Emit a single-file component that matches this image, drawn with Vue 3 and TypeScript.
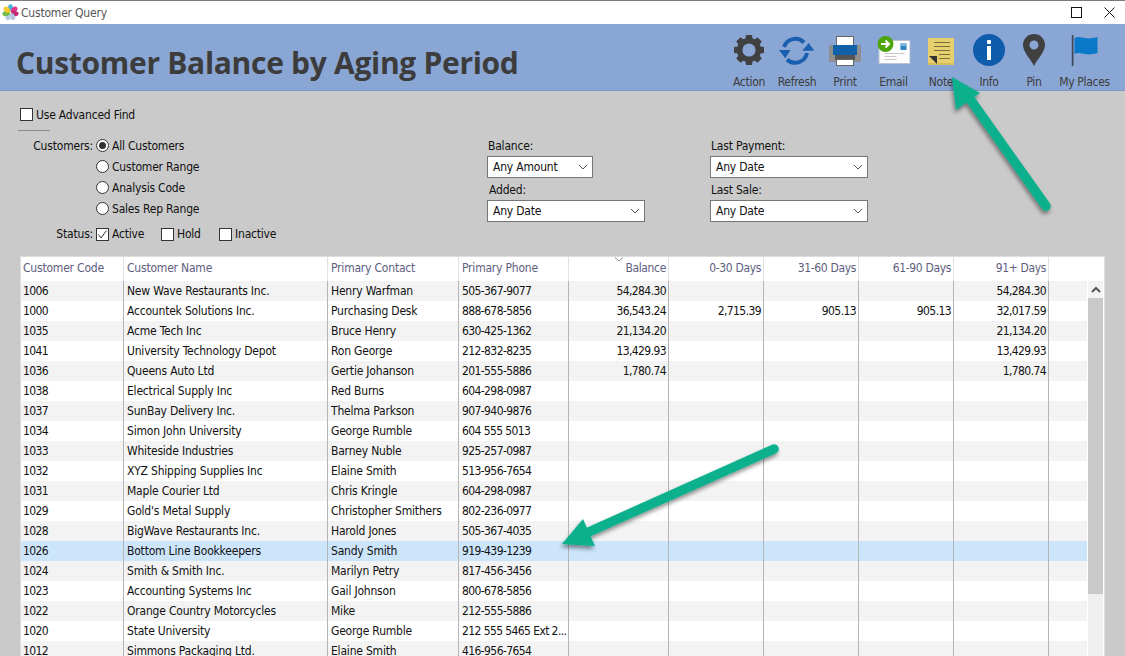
<script setup lang="ts">
interface Row { code: string; name: string; contact: string; phone: string; balance?: string; d30?: string; d60?: string; d90?: string; d91?: string; selected?: boolean }
const rows: Row[] = [
  { code: '1006', name: 'New Wave Restaurants Inc.', contact: 'Henry Warfman', phone: '505-367-9077', balance: '54,284.30', d91: '54,284.30' },
  { code: '1000', name: 'Accountek Solutions Inc.', contact: 'Purchasing Desk', phone: '888-678-5856', balance: '36,543.24', d30: '2,715.39', d60: '905.13', d90: '905.13', d91: '32,017.59' },
  { code: '1035', name: 'Acme Tech Inc', contact: 'Bruce Henry', phone: '630-425-1362', balance: '21,134.20', d91: '21,134.20' },
  { code: '1041', name: 'University Technology Depot', contact: 'Ron George', phone: '212-832-8235', balance: '13,429.93', d91: '13,429.93' },
  { code: '1036', name: 'Queens Auto Ltd', contact: 'Gertie Johanson', phone: '201-555-5886', balance: '1,780.74', d91: '1,780.74' },
  { code: '1038', name: 'Electrical Supply Inc', contact: 'Red Burns', phone: '604-298-0987' },
  { code: '1037', name: 'SunBay Delivery Inc.', contact: 'Thelma Parkson', phone: '907-940-9876' },
  { code: '1034', name: 'Simon John University', contact: 'George Rumble', phone: '604 555 5013' },
  { code: '1033', name: 'Whiteside Industries', contact: 'Barney Nuble', phone: '925-257-0987' },
  { code: '1032', name: 'XYZ Shipping Supplies Inc', contact: 'Elaine Smith', phone: '513-956-7654' },
  { code: '1031', name: 'Maple Courier Ltd', contact: 'Chris Kringle', phone: '604-298-0987' },
  { code: '1029', name: "Gold's Metal Supply", contact: 'Christopher Smithers', phone: '802-236-0977' },
  { code: '1028', name: 'BigWave Restaurants Inc.', contact: 'Harold Jones', phone: '505-367-4035' },
  { code: '1026', name: 'Bottom Line Bookkeepers', contact: 'Sandy Smith', phone: '919-439-1239', selected: true },
  { code: '1024', name: 'Smith & Smith Inc.', contact: 'Marilyn Petry', phone: '817-456-3456' },
  { code: '1023', name: 'Accounting Systems Inc', contact: 'Gail Johnson', phone: '800-678-5856' },
  { code: '1022', name: 'Orange Country Motorcycles', contact: 'Mike', phone: '212-555-5886' },
  { code: '1020', name: 'State University', contact: 'George Rumble', phone: '212 555 5465 Ext 2...' },
  { code: '1012', name: 'Simmons Packaging Ltd.', contact: 'Elaine Smith', phone: '416-956-7654' },
]
const tools = ['Action', 'Refresh', 'Print', 'Email', 'Note', 'Info', 'Pin', 'My Places']
const petals = [
  { a: 0, c: '#45b4dc' },
  { a: 52, c: '#e0358a' },
  { a: 103, c: '#c42b75' },
  { a: 155, c: '#b5c5e0' },
  { a: 206, c: '#b9cbe0' },
  { a: 257, c: '#73b848' },
  { a: 308, c: '#f8c92c' },
]
</script>

<template>
  <div class="win">
    <div class="titlebar">
      <svg class="logo" width="17" height="17" viewBox="0 0 17 17">
        <ellipse v-for="p in petals" :key="p.a" cx="8.500" cy="4" rx="2.500" ry="3.800" :fill="p.c" :transform="`rotate(${p.a} 8.500 8.500)`"/>
      </svg>
      <span class="wintitle">Customer Query</span>
      <span class="spacer"></span>
      <svg class="winbtn" width="11" height="11" viewBox="0 0 11 11"><rect x="0.500" y="0.500" width="10" height="10" fill="none" stroke="#111" stroke-width="1"/></svg>
      <svg class="winbtn close" width="11" height="11" viewBox="0 0 11 11"><path d="M0.500 0.500 L10.500 10.500 M10.500 0.500 L0.500 10.500" stroke="#111" stroke-width="1" fill="none"/></svg>
    </div>

    <header class="banner">
      <h1>Customer Balance by Aging Period</h1>
      <div class="tools">
        <div v-for="t in tools" :key="t" class="tool" :class="'t-' + t.replace(' ', '')">
          <svg v-if="t === 'Action'" width="30" height="30" viewBox="0 0 32 32">
            <g fill="#404040">
              <rect x="12.500" y="0" width="7" height="32" rx="1"/>
              <rect x="12.500" y="0" width="7" height="32" rx="1" transform="rotate(45 16 16)"/>
              <rect x="12.500" y="0" width="7" height="32" rx="1" transform="rotate(90 16 16)"/>
              <rect x="12.500" y="0" width="7" height="32" rx="1" transform="rotate(135 16 16)"/>
            </g>
            <circle cx="16" cy="16" r="10" fill="none" stroke="#404040" stroke-width="6"/>
            <circle cx="16" cy="16" r="7" fill="#8aa6d4"/>
          </svg>
          <svg v-else-if="t === 'Refresh'" width="36" height="30" viewBox="0 0 36 30">
            <path d="M25 7.500 A12 12 0 0 0 5 12" fill="none" stroke="#1a5eb0" stroke-width="4"/>
            <path d="M0 15 L11.500 15 L6.300 23.300z" fill="#1a5eb0"/>
            <path d="M28 18 A12 12 0 0 1 8 24.500" fill="none" stroke="#1a5eb0" stroke-width="4"/>
            <path d="M35.300 15.700 L23.300 15.700 L29.700 8z" fill="#1a5eb0"/>
          </svg>
          <svg v-else-if="t === 'Print'" width="32" height="30" viewBox="0 0 32 30">
            <rect x="0" y="9" width="32" height="17" fill="#8f8f8f"/>
            <rect x="7.500" y="0.500" width="17" height="12" fill="#fff" stroke="#666" stroke-width="1"/>
            <rect x="4" y="9" width="24" height="10" fill="#1060aa"/>
            <rect x="6" y="19" width="20" height="5" fill="#555"/>
            <rect x="7.500" y="23.500" width="17" height="6" fill="#fff" stroke="#666" stroke-width="1"/>
          </svg>
          <svg v-else-if="t === 'Email'" width="33" height="28" viewBox="0 0 33 28">
            <rect x="1.500" y="4.500" width="31" height="23" fill="#fdfdfd" stroke="#b9c3d6" stroke-width="1"/>
            <rect x="23" y="7.500" width="6" height="6.500" fill="#2f86c4"/>
            <rect x="23" y="7.500" width="6" height="2.500" fill="#7fb5dc"/>
            <path d="M7 17.500h20M7 20.500h12M7 23.500h12" stroke="#c8c8c8" stroke-width="1"/>
            <circle cx="8" cy="8" r="8" fill="#4ea50a"/>
            <path d="M3.500 8h8M8 4.500 L11.500 8 L8 11.500" stroke="#fff" stroke-width="2" fill="none"/>
          </svg>
          <svg v-else-if="t === 'Note'" width="26" height="27" viewBox="0 0 26 27">
            <rect width="26" height="27" fill="#e7cf6e"/>
            <rect y="25" width="26" height="2" fill="#d8be5a"/>
            <path d="M6 4.500h16M6 8.500h16M6 12.500h16M11 16.500h11M11 20.500h11" stroke="#77703f" stroke-width="1"/>
            <path d="M1 18 L9 18 L9 26z" fill="#333"/>
          </svg>
          <svg v-else-if="t === 'Info'" width="32" height="32" viewBox="0 0 32 32">
            <circle cx="16" cy="16" r="16" fill="#0f5cad"/>
            <rect x="14" y="6" width="4" height="4" rx="1" fill="#fff"/>
            <rect x="14" y="12" width="4" height="14" fill="#fff"/>
          </svg>
          <svg v-else-if="t === 'Pin'" width="22" height="32" viewBox="0 0 22 32">
            <path fill-rule="evenodd" d="M11 0 C4.900 0 0 4.900 0 11 C0 18 7 24 11 32 C15 24 22 18 22 11 C22 4.900 17.100 0 11 0z M11 6.500 A4.500 4.500 0 1 1 11 15.500 A4.500 4.500 0 1 1 11 6.500z" fill="#404040"/>
          </svg>
          <svg v-else width="27" height="31" viewBox="0 0 27 31">
            <rect x="0" y="0" width="2" height="31" fill="#404a5c"/>
            <path d="M3 3 C9 0 13 6 26 2 L26 18 C13 22 9 16 3 19z" fill="#0b79c9"/>
          </svg>
          <span class="tlabel">{{ t }}</span>
        </div>
      </div>
    </header>

    <main class="body">
      <label class="check advanced"><i class="box"></i>Use Advanced Find</label>
      <div class="rule"></div>

      <section class="filters">
        <div class="radios">
          <div class="fline"><span class="flabel">Customers:</span><label class="check"><i class="radio on"></i>All Customers</label></div>
          <div class="fline"><span class="flabel"></span><label class="check"><i class="radio"></i>Customer Range</label></div>
          <div class="fline"><span class="flabel"></span><label class="check"><i class="radio"></i>Analysis Code</label></div>
          <div class="fline"><span class="flabel"></span><label class="check"><i class="radio"></i>Sales Rep Range</label></div>
          <div class="fline status">
            <span class="flabel">Status:</span>
            <label class="check s1"><i class="box">
              <svg width="13" height="13" viewBox="0 0 13 13"><path d="M2.500 6.500 L5 10 L10.500 2.500" stroke="#333" stroke-width="1" fill="none"/></svg>
            </i>Active</label>
            <label class="check s2"><i class="box"></i>Hold</label>
            <label class="check"><i class="box"></i>Inactive</label>
          </div>
        </div>
        <div class="selects one">
          <div class="sel-label">Balance:</div>
          <div class="select w106"><span>Any Amount</span><svg width="10" height="6" viewBox="0 0 10 6"><path d="M1 1 L5 5 L9 1" fill="none" stroke="#555"/></svg></div>
          <div class="sel-label added">Added:</div>
          <div class="select w158"><span>Any Date</span><svg width="10" height="6" viewBox="0 0 10 6"><path d="M1 1 L5 5 L9 1" fill="none" stroke="#555"/></svg></div>
        </div>
        <div class="selects two">
          <div class="sel-label">Last Payment:</div>
          <div class="select w158"><span>Any Date</span><svg width="10" height="6" viewBox="0 0 10 6"><path d="M1 1 L5 5 L9 1" fill="none" stroke="#555"/></svg></div>
          <div class="sel-label">Last Sale:</div>
          <div class="select w158"><span>Any Date</span><svg width="10" height="6" viewBox="0 0 10 6"><path d="M1 1 L5 5 L9 1" fill="none" stroke="#555"/></svg></div>
        </div>
      </section>

      <section class="grid">
        <div class="thead">
          <div class="th c1">Customer Code</div>
          <div class="th c2 pad">Customer Name</div>
          <div class="th c3 pad">Primary Contact</div>
          <div class="th c4 pad">Primary Phone</div>
          <div class="th c5 num">
            <svg class="sort" width="10" height="5" viewBox="0 0 10 5"><path d="M1 0.500 L5 4 L9 0.500" fill="none" stroke="#888"/></svg>
            Balance
          </div>
          <div class="th c6 num">0-30 Days</div>
          <div class="th c7 num">31-60 Days</div>
          <div class="th c8 num">61-90 Days</div>
          <div class="th c9 num">91+ Days</div>
          <div class="th c10"></div>
        </div>
        <div class="tbody">
          <div class="rows">
            <div v-for="r in rows" :key="r.code" class="tr" :class="{ sel: r.selected }">
              <div class="td c1 digits">{{ r.code }}</div>
              <div class="td c2 pad">{{ r.name }}</div>
              <div class="td c3 pad">{{ r.contact }}</div>
              <div class="td c4 pad digits">{{ r.phone }}</div>
              <div class="td c5 num digits">{{ r.balance }}</div>
              <div class="td c6 num digits">{{ r.d30 }}</div>
              <div class="td c7 num digits">{{ r.d60 }}</div>
              <div class="td c8 num digits">{{ r.d90 }}</div>
              <div class="td c9 num digits">{{ r.d91 }}</div>
              <div class="c10b"></div>
            </div>
          </div>
          <div class="scroll">
            <div class="sbtn"><svg width="10" height="7" viewBox="0 0 10 7"><path d="M1 6 L5 2 L9 6" fill="none" stroke="#555" stroke-width="2"/></svg></div>
            <div class="thumb"></div>
            <div class="track"></div>
          </div>
        </div>
      </section>
    </main>

    <svg class="arrows" width="1125" height="656" viewBox="0 0 1125 656">
      <defs>
        <filter id="sh" x="-20%" y="-20%" width="140%" height="140%"><feDropShadow dx="-1" dy="3" stdDeviation="2" flood-color="#000" flood-opacity="0.45"/></filter>
      </defs>
      <g filter="url(#sh)" fill="#08b08c">
        <path d="M1046 206 L965 92" stroke="#08b08c" stroke-width="9.500" stroke-linecap="round" fill="none"/>
        <path d="M952 77 L980 93 L956 110z"/>
        <path d="M774 449 L582 535" stroke="#08b08c" stroke-width="9.500" stroke-linecap="round" fill="none"/>
        <path d="M562 544 L583 519 L595 546z"/>
      </g>
    </svg>
  </div>
</template>

<style>
html, body { margin: 0; background: #cacaca; }
</style>

<style scoped>
.win {
  position: relative;
  width: 1125px;
  height: 656px;
  overflow: hidden;
  background: #cacaca;
  font-family: "DejaVu Sans", "Noto Sans", sans-serif;
  font-stretch: condensed;
  font-size: 12px;
  letter-spacing: -0.2px;
  color: #111;
}
.titlebar {
  height: 23px;
  border-top: 1px solid #7a7a7a;
  background: #fff;
  display: flex;
  align-items: center;
  padding: 0 10px 0 2px;
}
.logo { margin-right: 2px; }
.wintitle { color: #555; }
.spacer { flex: 1; }
.winbtn { margin-left: 22px; }
.banner {
  height: 66px;
  background: #8aa6d4;
  border-bottom: 1px solid #7f9ac6;
  display: flex;
  align-items: flex-start;
  justify-content: space-between;
}
h1 {
  margin: 19px 0 0 16px;
  font-family: "Open Sans", sans-serif;
  font-stretch: normal;
  font-weight: 700;
  font-size: 30px;
  line-height: 40px;
  color: #3c3c3c;
  letter-spacing: -0.3px;
}
.tools { height: 100%; position: relative; width: 405px; }
.tool {
  position: absolute;
  top: 11px;
  transform: translateX(-50%);
  display: flex;
  flex-direction: column;
  align-items: center;
}
.tool svg { display: block; }
.tlabel {
  position: absolute;
  top: 40px;
  white-space: nowrap;
  color: #3c3c3c;
  letter-spacing: -0.3px;
}
.t-Action { left: 29px; }
.t-Refresh { left: 77px; }
.t-Print { left: 125px; top: 12px; }
.t-Email { left: 173.500px; top: 12px; }
.t-Note { left: 221px; top: 14px; }
.t-Info { left: 269px; top: 10px; }
.t-Pin { left: 314px; top: 10px; }
.t-MyPlaces { left: 364.500px; top: 11px; }
.t-Print .tlabel, .t-Email .tlabel { top: 39px; }
.t-Note .tlabel { top: 37px; }
.t-Info .tlabel, .t-Pin .tlabel { top: 41px; }
.body { padding: 16px 0 0 20px; }
.check { display: flex; align-items: center; white-space: nowrap; }
.box, .radio {
  display: block;
  width: 11px;
  height: 11px;
  margin-right: 3px;
  background: #fff;
  border: 1px solid #333;
  position: relative;
  flex: none;
}
.advanced .box { margin-top: -2px; }
.box svg { position: absolute; left: -1px; top: -1px; }
.radio { border-radius: 50%; }
.radio.on::after {
  content: "";
  position: absolute;
  left: 2px; top: 2px;
  width: 7px; height: 7px;
  border-radius: 50%;
  background: #333;
}
.advanced { height: 16px; }
.rule { width: 32px; height: 1px; background: #8a8a8a; margin: 7px 0 0 -2px; }
.filters { display: flex; height: 125px; }
.radios { width: 467px; padding-top: 4px; }
.fline { display: flex; align-items: center; height: 21px; }
.status { height: 24px; padding-top: 3px; }
.flabel { width: 73px; text-align: right; margin: 0 3px 0 0; }
.s1 { width: 65px; }
.s2 { width: 58px; }
.selects { padding-top: 3px; }
.one { width: 158px; }
.two { margin-left: 65px; }
.sel-label { height: 22px; line-height: 24px; padding-left: 1px; }
.added { padding-left: 2px; }
.select {
  height: 22px;
  box-sizing: border-box;
  background: #fff;
  border: 1px solid #777;
  display: flex;
  align-items: center;
  justify-content: space-between;
  padding: 0 4px 0 5px;
}
.w106 { width: 106px; }
.w158 { width: 158px; }
.grid {
  width: 1085px;
  background: #fff;
  box-sizing: border-box;
  border: 1px solid #ddd;
  border-bottom: 0;
  height: 400px;
}
.thead { display: flex; height: 24px; color: #5e5e7e; }
.th {
  height: 24px;
  line-height: 22px;
  box-sizing: border-box;
  padding: 0 3px 0 2px;
  border-right: 1px solid #e2e2e2;
  white-space: nowrap;
  position: relative;
  flex: none;
}
.sort { position: absolute; left: 45px; top: 0; }
.c1 { width: 103px; }
.c2 { width: 204px; }
.c3 { width: 131px; }
.c4 { width: 110px; }
.c5 { width: 100px; }
.c6 { width: 95px; }
.c7 { width: 95px; }
.c8 { width: 95px; }
.c9 { width: 95px; }
.c10 { width: 39px; border-right: 0; }
.c10b { width: 38px; flex: none; }
.tbody { display: flex; }
.rows { width: 1066px; flex: none; }
.tr { display: flex; height: 20px; background: #fff; }
.tr:nth-child(odd) { background: #f3f3f3; }
.tr.sel { background: #cce5fb; }
.td {
  height: 20px;
  line-height: 20px;
  box-sizing: border-box;
  padding: 0 3px 0 2px;
  border-right: 1px solid #b5b5b5;
  white-space: nowrap;
  overflow: hidden;
  flex: none;
}
.th.pad, .td.pad { padding-left: 3px; }
.digits { letter-spacing: -0.6px; }
.th.num, .td.num { text-align: right; padding-right: 2px; }
.th.num { letter-spacing: -0.35px; }
.scroll { width: 15px; margin-left: 1px; display: flex; flex-direction: column; background: #f3f3f3; }
.sbtn { height: 17px; display: flex; align-items: center; justify-content: center; }
.thumb { height: 296px; background: #c9c9c9; }
.track { flex: 1; background: #efefef; }
.arrows { position: absolute; left: 0; top: 0; pointer-events: none; }
</style>
